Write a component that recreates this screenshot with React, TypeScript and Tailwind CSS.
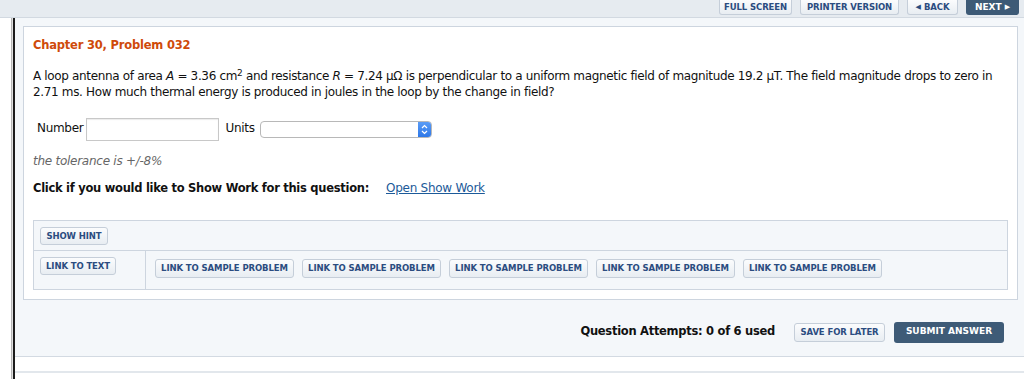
import React from "react";

const btn =
  "flex items-center justify-center rounded-[3px] border border-[#c5ced9] bg-gradient-to-b from-[#fbfcfd] to-[#e8edf2] text-[#2b4c80] font-bold text-[8.5px] leading-none tracking-[-0.1px] whitespace-nowrap";

function SmallBtn({ label, w, h = 18 }: { label: string; w: number; h?: number }) {
  return (
    <div className={btn} style={{ width: w, height: h }}>
      {label}
    </div>
  );
}

export default function App() {
  return (
    <div className="w-[1024px] h-[379px] overflow-hidden bg-white font-['DejaVu_Sans',_'Verdana',_sans-serif] text-[#111]">
      {/* top bar */}
      <div className="h-[18px] bg-[#e6ebf0] border-b border-[#d2d9e1] flex justify-end items-start pr-[5px] gap-[8px]">
        <div className={btn + " w-[73px] h-[15px] rounded-t-none border-t-0"}>FULL SCREEN</div>
        <div className={btn + " w-[99px] h-[15px] rounded-t-none border-t-0"}>PRINTER VERSION</div>
        <div className={btn + " w-[51px] h-[15px] rounded-t-none border-t-0 gap-[3px]"}>
          <span className="text-[7px]">◀</span>BACK
        </div>
        <div className="w-[53px] h-[15px] rounded-b-[3px] bg-[#3d5a76] text-white font-bold text-[9px] leading-none flex items-center justify-center gap-[3px]">
          NEXT<span className="text-[7px]">▶</span>
        </div>
      </div>

      <div className="flex h-[361px]">
        {/* left gutter */}
        <div className="w-[11px] bg-white" />
        <div className="w-[1px] bg-[#b5b5b5]" />
        <div className="w-[1px] bg-[#e0e0e0]" />
        <div className="w-[2px] bg-[#1b1b1b]" />

        <div className="flex-1 flex flex-col">
          <div className="bg-[#f4f7fa] pt-[8px] pl-[8px] pr-[6px]">
            {/* card */}
            <div className="bg-white border border-[#cdd5df] h-[274px] px-[9px]">
              <div className="pt-[10px] text-[11.5px] tracking-[-0.2px] font-bold text-[#cf4a0a] leading-[16px]">
                Chapter 30, Problem 032
              </div>
              <p className="mt-[15px] text-[12px] tracking-[-0.34px] leading-[16px] text-[#111] pr-[8px]">
                A loop antenna of area <i>A</i> = 3.36 cm<sup className="text-[9px] leading-none">2</sup> and resistance <i>R</i> = 7.24 μΩ is
                perpendicular to a uniform magnetic field of magnitude 19.2 μT. The field magnitude drops to zero in 2.71 ms.
                How much thermal energy is produced in joules in the loop by the change in field?
              </p>
              <div className="mt-[18px] flex items-start text-[12px] tracking-[-0.3px] leading-[16px]">
                <span className="ml-[4px] mt-[2px]">Number</span>
                <div className="ml-[3px] w-[133px] h-[23px] border border-[#c8c8c8] bg-white shadow-[inset_0_1px_1px_rgba(0,0,0,0.08)]" />
                <span className="ml-[6px] mt-[2px]">Units</span>
                <div className="ml-[5px] mt-[3px] w-[172px] h-[17px] border border-[#b8b8b8] rounded-[4px] bg-white flex justify-end overflow-hidden">
                  <div className="w-[13px] h-full bg-gradient-to-b from-[#5a9cf6] to-[#2d77e8] flex items-center justify-center">
                    <svg width="7" height="11" viewBox="0 0 7 11">
                      <path d="M1 4 L3.5 1.5 L6 4 M1 7 L3.5 9.5 L6 7" stroke="white" strokeWidth="1.2" fill="none" />
                    </svg>
                  </div>
                </div>
              </div>
              <div className="mt-[12px] text-[12px] tracking-[-0.26px] leading-[16px] italic text-[#666]">the tolerance is +/-8%</div>
              <div className="mt-[11px] text-[12px] leading-[16px] flex">
                <span className="font-bold text-[11.5px] tracking-[-0.28px]">Click if you would like to Show Work for this question:</span>
                <span className="ml-[17px] text-[#1c5a99] underline tracking-[-0.26px]">Open Show Work</span>
              </div>
              {/* hint box */}
              <div className="mt-[24px] border border-[#cdd5df] bg-[#f4f7fa]">
                <div className="h-[30px] border-b border-[#cdd5df] pl-[6px] pt-[6px]">
                  <SmallBtn label="SHOW HINT" w={68} h={18} />
                </div>
                <div className="flex h-[38px]">
                  <div className="w-[112px] border-r border-[#cdd5df] pl-[6px] pt-[6px]">
                    <SmallBtn label="LINK TO TEXT" w={76} h={18} />
                  </div>
                  <div className="flex gap-[8px] pl-[9px] pt-[8px]">
                    {[0, 1, 2, 3, 4].map((i) => (
                      <SmallBtn key={i} label="LINK TO SAMPLE PROBLEM" w={139} h={19} />
                    ))}
                  </div>
                </div>
              </div>
            </div>
            {/* footer */}
            <div className="h-[56px] flex items-center justify-end pr-[14px] pt-[8px]">
              <span className="text-[11.5px] tracking-[-0.28px] font-bold mr-[19px]">Question Attempts: 0 of 6 used</span>
              <SmallBtn label="SAVE FOR LATER" w={91} h={19} />
              <div className="ml-[9px] w-[110px] h-[21px] rounded-[3px] bg-[#3e5b77] text-white font-bold text-[9px] flex items-center justify-center">
                SUBMIT ANSWER
              </div>
            </div>
          </div>
          <div className="h-[1px] bg-[#d3dae2]" />
          <div className="h-[14px] bg-white" />
          <div className="h-[2px] bg-[#e2e7ec]" />
          <div className="flex-1 bg-white" />
        </div>
      </div>
    </div>
  );
}
